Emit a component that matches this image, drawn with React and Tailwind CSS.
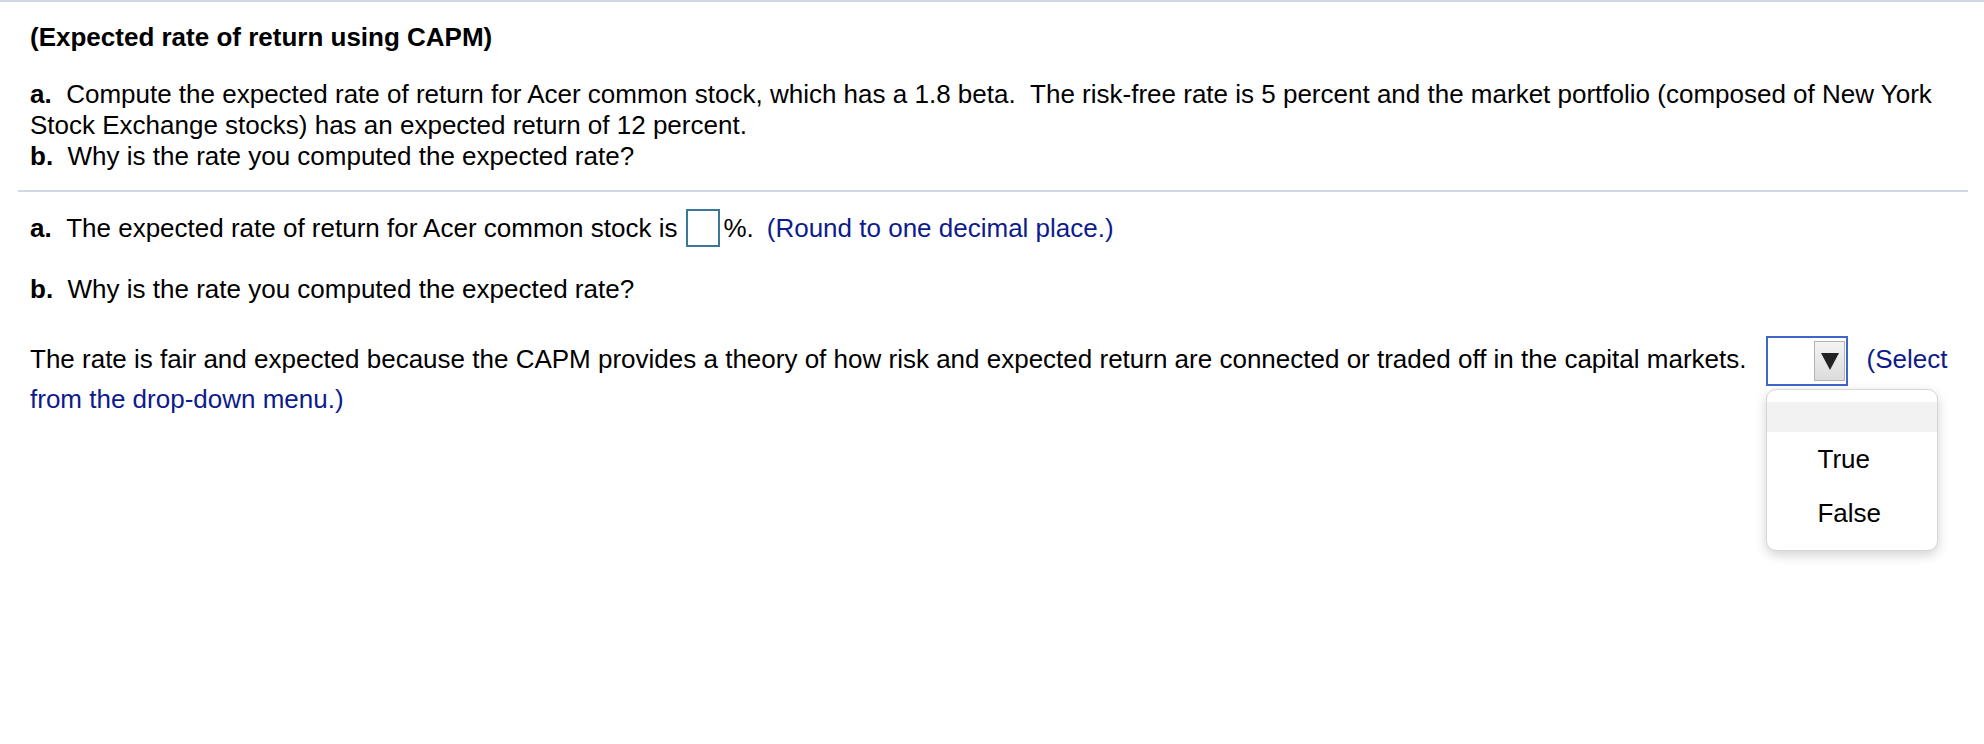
import { useState } from 'react';

// Inline select with an open option list under it
function DropdownChoice({ options }) {
  const [value, setValue] = useState('');

  return (
    <span className="relative inline-block align-middle -my-[6px] ml-[20px] mr-[18px]">
      <span className="flex h-[50px] w-[82px] items-center justify-end border-2 border-[#3f66c9] bg-white pr-[1px]">
        <span className="flex h-[40px] w-[31px] items-center justify-center border border-[#b4b4b4] bg-gradient-to-b from-[#f4f4f4] to-[#dcdcdc]">
          <svg width="22" height="22" viewBox="0 0 22 22">
            <path d="M2 3 H20 L11 20 Z" fill="#222" />
          </svg>
        </span>
      </span>

      {/* Option menu */}
      <div className="absolute left-0 top-[53px] z-10 w-[172px] rounded-[10px] border border-[#d6d6d6] bg-white pt-[12px] pb-[10px] shadow-[0_4px_12px_rgba(0,0,0,0.18)]">
        <div className="h-[30px] bg-[#f2f2f2]" />
        {options.map((opt) => (
          <div
            key={opt}
            onClick={() => setValue(opt)}
            className={`flex h-[54px] items-center pl-[50px] leading-none text-black ${value === opt ? 'bg-[#f2f2f2]' : ''}`}
          >
            {opt}
          </div>
        ))}
      </div>
    </span>
  );
}

export default function App() {
  return (
    <div
      className="min-h-[744px] w-full border-t-2 border-[#d3d7e1] bg-white text-[26px] leading-[31px] text-black"
      style={{ fontFamily: '"Liberation Sans", Arial, sans-serif' }}
    >
      <div className="mx-[18px] mr-[16px]">
        {/* Question */}
        <div className="pl-3 pt-[20px] pb-[18px]">
          <p className="font-bold">(Expected rate of return using CAPM)</p>
          <p className="mt-[26px]">
            <span className="font-bold">a.</span>
            {'\u00a0\u00a0'}Compute the expected rate of return for Acer common stock, which has a 1.8 beta.{'\u00a0\u00a0'}The risk-free rate is 5 percent and the market portfolio (composed of New York Stock Exchange stocks) has an expected return of 12 percent.
          </p>
          <p>
            <span className="font-bold">b.</span>
            {'\u00a0\u00a0'}Why is the rate you computed the expected rate?
          </p>
        </div>

        <div className="h-[2px] bg-[#d3d7e1]" />

        {/* Answers */}
        <div className="pl-3 pt-[16px]">
          <div className="flex h-[40px] items-center">
            <span className="font-bold">a.</span>
            <span>{'\u00a0\u00a0'}The expected rate of return for Acer common stock is</span>
            <span className="ml-[9px] mr-[3px] inline-block h-[38px] w-[34px] border-2 border-[#3a7898] bg-white" />
            <span>%.</span>
            <span className="ml-[13px] text-[#0d1b8c]">(Round to one decimal place.)</span>
          </div>

          <p className="mt-[26px]">
            <span className="font-bold">b.</span>
            {'\u00a0\u00a0'}Why is the rate you computed the expected rate?
          </p>

          <p className="mt-[35px] leading-[38px]">
            The rate is fair and expected because the CAPM provides a theory of how risk and expected return are connected or traded off in the capital markets.
            <DropdownChoice options={['True', 'False']} />
            <span className="text-[#0d1b8c]">(Select from the drop-down menu.)</span>
          </p>
        </div>
      </div>
    </div>
  );
}
